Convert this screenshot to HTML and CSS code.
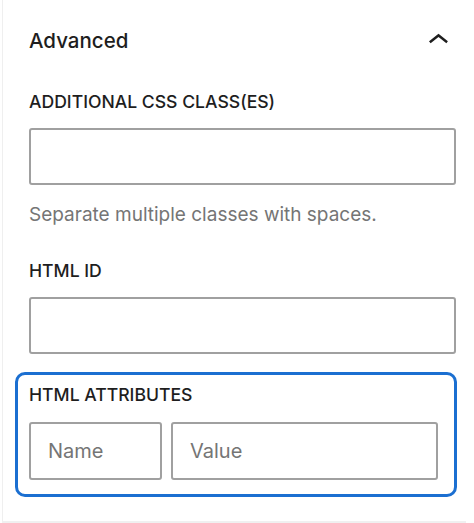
FILE: index.html
```html
<!DOCTYPE html>
<html lang="en">
<head>
<meta charset="utf-8">
<title>Advanced</title>
<link rel="stylesheet" href="styles.css">
</head>
<body>
<div class="panel">
  <div class="header">
    <span class="title">Advanced</span>
    <svg class="chevron" viewBox="0 0 24 24" width="41" height="41" aria-hidden="true"><path d="M6.5 12.4L12 8l5.5 4.4-.9 1.2L12 10l-4.6 3.6-1-1.2z" fill="#1e1e1e"/></svg>
  </div>
  <div class="field first">
    <label class="label">ADDITIONAL CSS CLASS(ES)</label>
    <input class="input" type="text">
    <p class="help">Separate multiple classes with spaces.</p>
  </div>
  <div class="field second">
    <label class="label">HTML ID</label>
    <input class="input" type="text">
  </div>
  <div class="attrs">
    <label class="label">HTML ATTRIBUTES</label>
    <div class="attr-row">
      <input class="input name" type="text" placeholder="Name">
      <input class="input value" type="text" placeholder="Value">
    </div>
  </div>
</div>
</body>
</html>
```
FILE: styles.css
```css
html, body {
  margin: 0;
  padding: 0;
  background: #ffffff;
}
body {
  font-family: Inter, "Liberation Sans", sans-serif;
  color: #1e1e1e;
}
.panel {
  margin-left: 2px;
  width: 427px;
  border-left: 1px solid #efefef;
  border-bottom: 2px solid #f0f0f0;
  padding: 20px 10px 24px 26px;
}
.header {
  display: flex;
  justify-content: space-between;
  align-items: center;
  height: 41px;
}
.title {
  font-size: 20.5px;
  font-weight: 500;
  line-height: 41px;
}
.chevron {
  display: block;
  margin-right: -3px;
}
.field {
  display: flex;
  flex-direction: column;
}
.field.first { margin-top: 31px; }
.field.second { margin-top: 35px; }
.label {
  display: block;
  font-size: 17.6px;
  font-weight: 500;
  line-height: 20px;
  margin-bottom: 16px;
}
.input {
  box-sizing: border-box;
  width: 100%;
  height: 57px;
  margin: 0;
  border: 2px solid #a0a0a0;
  border-radius: 3px;
  background: #fff;
  font-family: inherit;
  font-size: 20px;
  padding: 0 17px;
  color: #1e1e1e;
  outline: none;
}
.input::placeholder {
  color: #757575;
}
.help {
  margin: 19px 0 0;
  font-size: 19px;
  line-height: 22px;
  color: #757575;
}
.attrs {
  margin: 18px 0 0 -14px;
  width: 442px;
  box-sizing: border-box;
  border: 3px solid #1b6fd1;
  border-radius: 10px;
  padding: 10px 16px 14px 11px;
}
.attrs .label {
  margin-bottom: 17px;
}
.attr-row {
  display: flex;
  gap: 9px;
}
.attr-row .input {
  height: 58px;
}
.attr-row .name {
  width: 133px;
  flex: none;
}
.attr-row .value {
  flex: 1;
  width: auto;
  min-width: 0;
}
```
